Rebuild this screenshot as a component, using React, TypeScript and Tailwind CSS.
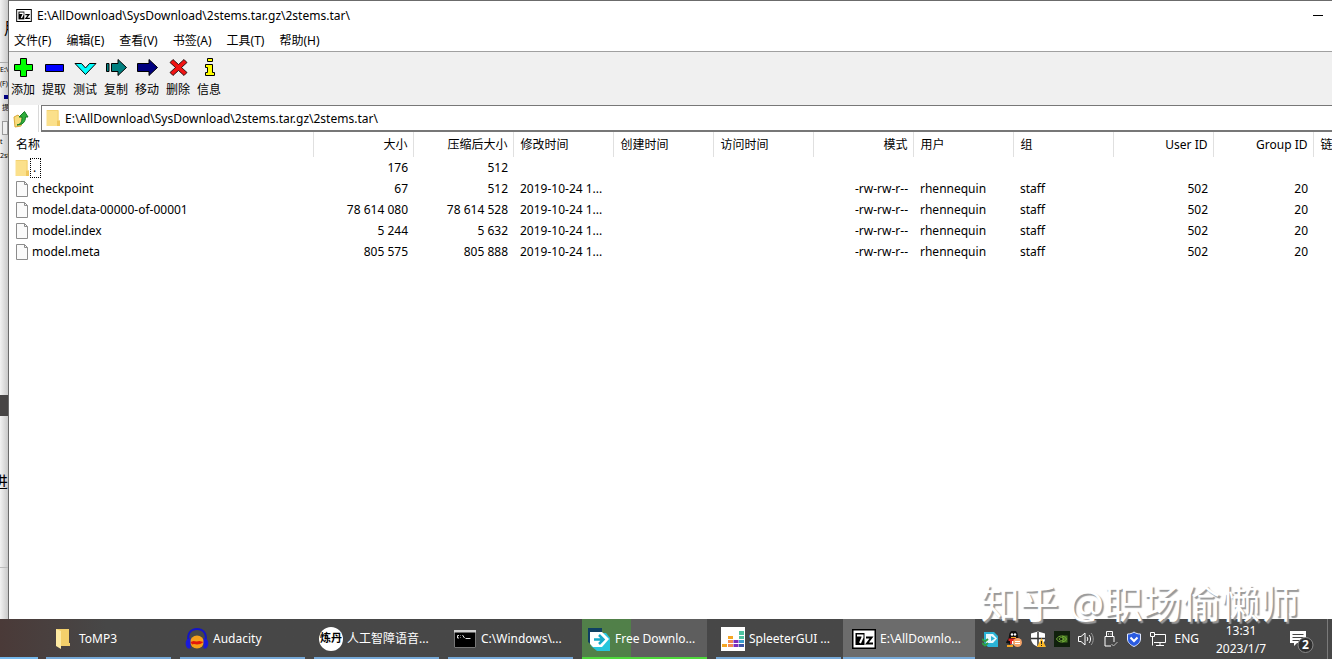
import type { ReactNode } from "react";

const PATH = "E:\\AllDownload\\SysDownload\\2stems.tar.gz\\2stems.tar\\";

const menus = ["文件(F)", "编辑(E)", "查看(V)", "书签(A)", "工具(T)", "帮助(H)"];

const tools: { label: string; icon: ReactNode }[] = [
  {
    label: "添加",
    icon: <path d="M9.500.5h6v6h6v6h-6v6h-6v-6h-6v-6h6z" fill="#0f0" />,
  },
  { label: "提取", icon: <path d="M3.500 6.500h18v7h-18z" fill="#00f" /> },
  {
    label: "测试",
    icon: <path d="M2 5.500h6.500l4 4.500 4-4.500H23L12.500 16.500z" fill="#0ff" />,
  },
  {
    label: "复制",
    icon: (
      <>
        <path d="M2.500 5.500h2.500v8H2.500z" fill="#008080" />
        <path d="M7.500 5.500H14v-4l8.500 8-8.500 8v-4H7.500z" fill="#008080" />
      </>
    ),
  },
  {
    label: "移动",
    icon: <path d="M2.500 5.500H14v-4l8.500 8-8.500 8v-4H2.500z" fill="#000080" />,
  },
  {
    label: "删除",
    icon: (
      <path
        d="M4 4.500l3-3 5.500 5 5.500-5 3 3-5.500 5 5.500 5-3 3-5.500-5-5.500 5-3-3 5.500-5z"
        fill="#f01414"
        strokeWidth=".8"
      />
    ),
  },
  {
    label: "信息",
    icon: (
      <path
        d="M10.500.5h5v3h-5zM8.500 6.500h7v8h2v3h-9v-3h2v-5h-2z"
        fill="#ff0"
      />
    ),
  },
];

type Column = { label: string; right?: boolean };

const columns: Column[] = [
  { label: "名称" },
  { label: "大小", right: true },
  { label: "压缩后大小", right: true },
  { label: "修改时间" },
  { label: "创建时间" },
  { label: "访问时间" },
  { label: "模式", right: true },
  { label: "用户" },
  { label: "组" },
  { label: "User ID", right: true },
  { label: "Group ID", right: true },
  { label: "链接" },
];

const DATE = "2019-10-24 1...";

const rows = [
  [".", "176", "512", "", "", "", "", "", "", "", "", ""],
  ["checkpoint", "67", "512"],
  ["model.data-00000-of-00001", "78 614 080", "78 614 528"],
  ["model.index", "5 244", "5 632"],
  ["model.meta", "805 575", "805 888"],
].map((r) =>
  r.length > 3
    ? r
    : [...r, DATE, "", "", "-rw-rw-r--", "rhennequin", "staff", "502", "20", ""]
);

function FolderIcon({ className }: { className?: string }) {
  return (
    <svg viewBox="0 0 14 16" className={className} aria-hidden>
      <path d="M.5 0h12v10.500H14V16H.5z" fill="#fbe08b" />
      <path d="M11 10.500h3V16h-3z" fill="#f0c75e" />
      <path d="M1 .5h11v10" fill="none" stroke="#f3d273" />
    </svg>
  );
}

function OpenFolderIcon() {
  return (
    <svg viewBox="0 0 16 20" className="h-5 w-4" aria-hidden>
      <path d="M1 0h13v14h1v3H5z" fill="#f3cf6b" />
      <path d="M1 0l5 2v18l-5-3z" fill="#fde9a2" />
    </svg>
  );
}

function FileIcon() {
  return (
    <svg viewBox="0 0 14 16" className="h-4 w-3.5 shrink-0" aria-hidden>
      <path d="M1.500.5h8l3 3v12h-11z" fill="#fafafa" stroke="#8c8c8c" />
      <path d="M9.500.5v3h3" fill="none" stroke="#8c8c8c" />
    </svg>
  );
}

function SevenZipIcon({ className }: { className?: string }) {
  return (
    <svg viewBox="0 0 24 20" className={className} aria-hidden>
      <path d="M0 0h24v20H0z" fill="#000" />
      <path d="M1.500 1.500h21v17h-21z" fill="#fff" />
      <path d="M3.500 4h9v12h-9z" fill="#000" />
      <path d="M5 6.500h5.500v2L8 14" fill="none" stroke="#fff" strokeWidth="2" />
      <path d="M14 8.500h5.500L15 14.500h6" fill="none" stroke="#000" strokeWidth="2" />
    </svg>
  );
}

function AudacityIcon() {
  return (
    <svg viewBox="0 0 24 24" className="size-6" aria-hidden>
      <ellipse cx="12" cy="15" rx="7" ry="6.500" fill="#f6a01a" />
      <path d="M5.500 15l3-1 3 .5 3-.5 4 1-3 2-3.500.5-3-.5-2 .5z" fill="#e3170a" />
      <path d="M3.500 14C2 6.500 6 2 12 2s10 4.500 8.500 12" fill="none" stroke="#1414c8" strokeWidth="2" />
      <path d="M5.500 11v10.500H3C0 19 0 14 2.500 12zM18.500 11v10.500H21c3-2.500 3-7.500.5-9.500z" fill="#1a1ad8" />
    </svg>
  );
}

function ConsoleIcon() {
  return (
    <svg viewBox="0 0 24 24" className="size-6" aria-hidden>
      <path d="M1 3h22v18H1z" fill="#000" />
      <path d="M1.500 3.500h21v17h-21z" fill="none" stroke="#777" />
      <path d="M1 3h22v2.500H1z" fill="#d0d0d0" />
      <path d="M6 8.500H4.500v2.500H6M7.500 8.500v.5M7.500 10.500v.5M9.500 8l2 3M12.500 11.500h5" fill="none" stroke="#ddd" />
    </svg>
  );
}

function DownloadIcon() {
  return (
    <svg viewBox="0 0 24 24" className="size-6" aria-hidden>
      <path d="M1 1h14v8l-8 11-6-5z" fill="#0f3f63" />
      <path d="M14 6h5l4 5v13H10l-6-5z" fill="#27c6dc" />
      <path d="M3 5h12l7 7-7 8H6l-3-3z" fill="#fff" />
      <path d="M7 12.500h9M12 8l4.500 4.500L12 17" fill="none" stroke="#15a9c7" strokeWidth="2.500" />
    </svg>
  );
}

function SpleeterIcon() {
  return (
    <svg viewBox="0 0 24 24" className="size-6" aria-hidden>
      <path d="M0 0h24v24H0z" fill="#fff" />
      <path d="M1 17h5v3H1zM7 9h5v3H7z" fill="#f5a623" />
      <path d="M7 13h5v3H7zM7 17h5v3H7z" fill="#f58a4e" />
      <path d="M12.500 13h5v3h-5zM12.500 17h5v3h-5z" fill="#7b2dbb" />
      <path d="M18 4h5v4h-5zM18 9h5v3h-5z" fill="#4fc3a1" />
      <path d="M18 13h5v3h-5z" fill="#3a9fd0" />
      <path d="M18 17h5v3h-5z" fill="#3c55a5" />
    </svg>
  );
}

function AlchemyIcon() {
  return (
    <span className="flex size-6 items-center justify-center rounded-full bg-white text-[11px] font-bold text-black">
      炼丹
    </span>
  );
}

const tasks = [
  { label: "ToMP3", icon: <OpenFolderIcon /> },
  { label: "Audacity", icon: <AudacityIcon /> },
  { label: "人工智障语音...", icon: <AlchemyIcon /> },
  { label: "C:\\Windows\\...", icon: <ConsoleIcon /> },
  {
    label: "Free Downlo...",
    icon: <DownloadIcon />,
    look: "border-[#4fd83c] bg-linear-to-r from-[#518049] from-39% to-[#5e5e5e] to-39%",
  },
  { label: "SpleeterGUI ...", icon: <SpleeterIcon /> },
];

function TaskButton({ label, icon, look }: { label: string; icon: ReactNode; look: string }) {
  return (
    <button
      className={`flex h-full shrink-0 items-center gap-1 border-b-2 pt-px whitespace-nowrap ${look}`}
    >
      <span className="flex size-6 shrink-0 items-center justify-center">{icon}</span>
      {label}
    </button>
  );
}

const trayIcons: { name: string; icon: ReactNode }[] = [
  {
    name: "Downloads",
    icon: (
      <>
        <path d="M2 1h10l4 4v11H6L2 12z" fill="#2bb3d6" />
        <path d="M4 3h7l4 4.500-4 4.500H4z" fill="#e8f8fb" />
        <path d="M9 5l4 2.500L9 10z" fill="#2bb3d6" />
        <path d="M0 8l3 2.500L6 8M0 12l3 2.500L6 12" fill="none" stroke="#2f9e44" strokeWidth="2" />
      </>
    ),
  },
  {
    name: "QQ",
    icon: (
      <>
        <path d="M3 5a4 5 0 0 1 9 0c0 3 2 5 2 7l-2 .5c0 2-9 2-9 0L0 12c0-2 3-4 3-7z" fill="#111" />
        <path d="M4.500 9.500h6v4h-6z" fill="#fff" />
        <path d="M2.500 7.500h10v2.500H6v3H4v-3H2.500z" fill="#e02020" />
        <circle cx="6" cy="3.500" r="1.200" fill="#fff" />
        <circle cx="9" cy="3.500" r="1.200" fill="#fff" />
        <path d="M5 6h5v1H5z" fill="#f5a623" />
        <path d="M1 14h6v2H1z" fill="#f5a623" />
        <circle cx="11.500" cy="11.500" r="4.500" fill="#f4a368" />
        <path d="M9 10.500h5M9 12.500h5" stroke="#fff" />
      </>
    ),
  },
  {
    name: "Security",
    icon: (
      <>
        <path d="M8 .5l7 2v5c0 4-3 7-7 8.500C4 14.500 1 11.500 1 7.500v-5z" fill="#fff" />
        <path d="M8 1v14M1 7.500h14" stroke="#333" strokeWidth="1.500" />
        <path d="M11.500 7l4.500 9H7z" fill="#fcb827" />
        <path d="M11.500 10v3M11.500 14v1" stroke="#222" />
      </>
    ),
  },
  {
    name: "NVIDIA",
    icon: (
      <>
        <path d="M0 0h16v16H0z" fill="#10200c" />
        <path d="M8 4.500h5.500v7H8z" fill="#5b9a2b" fillOpacity=".7" />
        <path d="M2.500 8c2-4 8-4 10 0-2 4-8 4-10 0zM5 8c1-2 4-2 5 0-1 2-4 2-5 0z" fill="none" stroke="#76b03a" />
      </>
    ),
  },
  {
    name: "Volume",
    icon: (
      <g fill="none" stroke="#fff">
        <path d="M.5 5.500h2.500l4-3.500v12l-4-3.500H.5z" />
        <path d="M9 6c1 1 1 3 0 4M11 4c2 2 2 6 0 8" />
        <path d="M13 2c3 3 3 9 0 12" stroke="#999" />
      </g>
    ),
  },
  {
    name: "USB",
    icon: (
      <g fill="none" stroke="#fff">
        <path d="M4.500 5V.5h6V5M3 5.500h9V11M3 5.500v9.500h6M6 3h1M8.500 3h1" />
        <path d="M9.500 13l2 2 4-4" stroke="#bbb" />
      </g>
    ),
  },
  {
    name: "Guard",
    icon: (
      <>
        <path d="M8 1c2 1.500 4 2 6.500 2v5c0 3.500-3 6-6.500 7.500C4.500 14 1.500 11.500 1.500 8V3C4 3 6 2.500 8 1z" fill="#2a5be0" stroke="#dfe8ff" />
        <path d="M4.500 6.500L8 10l3.500-3.500" fill="none" stroke="#fff" strokeWidth="2" />
      </>
    ),
  },
  {
    name: "Network",
    icon: (
      <g fill="none" stroke="#fff">
        <path d="M5 3.500h10.500v8H4M10 11.500v3M6 14.500h8" />
        <path d="M.5 1.500h4v4h-4zM2.500 5.500v9" />
      </g>
    ),
  },
];

function Tray() {
  return (
    <div className="flex h-full items-center pr-1">
      <div className="flex items-center gap-2">
        {trayIcons.map((t) => (
          <button key={t.name} aria-label={t.name}>
            <svg viewBox="0 0 16 16" className="size-4" aria-hidden>
              {t.icon}
            </svg>
          </button>
        ))}
      </div>
      <button className="ml-2">ENG</button>
      <button className="ml-3.5 w-[56px] pt-0.5 text-center leading-[18px] whitespace-nowrap">
        13:31
        <br />
        2023/1/7
      </button>
      <button className="relative ml-5 size-6" aria-label="2 notifications">
        <svg viewBox="0 0 24 24" className="size-6 overflow-visible" aria-hidden>
          <path d="M1 4h16v12H8l-3 3v-3H1z" fill="#fff" />
          <path d="M3.500 7.500h11M3.500 10.500h11M3.500 13.500h7" stroke="#474747" />
          <circle cx="16.500" cy="18" r="7.500" fill="#2f2f2f" stroke="#8a8a8a" />
        </svg>
        <span className="absolute top-[9px] left-[13px] text-[12px] leading-[18px] font-bold">2</span>
      </button>
      <span className="ml-3.5 h-full w-px bg-[#7a7a7a]" />
    </div>
  );
}

/* Sliver of the browser window that sits behind the archive window */
function BackgroundStrip() {
  return (
    <div
      className="flex w-2 shrink-0 flex-col overflow-hidden bg-linear-to-r from-[#f2f2f2] to-[#c9c9c9] whitespace-nowrap text-black"
      aria-hidden
    >
      <span className="mt-4 ml-1 h-[46px] text-[16px] leading-6">用</span>
      <div className="h-[96px] border-t border-[#aaa] text-[7px] leading-[14px]">
        <p>E:\</p>
        <p>(F)</p>
        <div className="mt-1 ml-1 h-1 w-1 bg-[#000080]" />
        <p className="ml-0.5 h-[22px] pt-0.5">提</p>
        <p className="ml-0.5 h-3.5 border border-[#999] bg-[#eee]" />
        <p>t</p>
        <p>2ste</p>
      </div>
      <div className="mt-[237px] h-[21px] bg-[#474545]" />
      <span className="mt-[54px] -ml-2 text-[16px] leading-6">进行</span>
      <div className="mt-auto h-[52px] border-t border-[#bbb]" />
    </div>
  );
}

export default function App() {
  return (
    <div className="relative flex h-screen flex-col overflow-hidden bg-white font-['Noto_Sans','Noto_Sans_CJK_SC',sans-serif] text-[12px] text-black">
      <div className="flex min-h-0 flex-1">
        <BackgroundStrip />
        <main className="flex min-w-0 flex-1 flex-col border-t border-l border-[#6b6b6b] bg-white">
          <header className="flex h-[29px] shrink-0 items-center gap-[5px] pr-[9px] pl-[7px]">
            <SevenZipIcon className="h-[13px] w-4" />
            <h1>{PATH}</h1>
            <button className="ml-auto flex h-5 w-2.5 items-center" aria-label="Minimize">
              <span className="h-px w-full bg-black" />
            </button>
          </header>

          <nav className="flex h-[22px] shrink-0 items-center gap-[15px] border-b border-[#a0a0a0] px-[5px]">
            {menus.map((m) => (
              <button key={m} className="whitespace-nowrap">
                {m}
              </button>
            ))}
          </nav>

          <div className="flex h-[53px] shrink-0 items-start gap-[7px] bg-[#f0f0f0] pt-1.5 pl-0.5">
            {tools.map((t) => (
              <button key={t.label} className="flex w-6 flex-col items-center gap-0.5">
                <svg viewBox="0 0 24 20" className="h-5 w-6" stroke="#000" aria-hidden>
                  {t.icon}
                </svg>
                <span className="leading-5 whitespace-nowrap">{t.label}</span>
              </button>
            ))}
          </div>

          <div className="flex h-[27px] shrink-0">
            <button className="mr-0.5 flex w-[30px] items-center border-r border-[#d8d8d8] pl-1" aria-label="Up">
              <svg viewBox="0 0 16 18" className="h-[18px] w-4" aria-hidden>
                <path d="M1 7l4-2 2 2h3l-2 9-6 1z" fill="#f8dc7c" stroke="#d9a93a" />
                <path d="M4 15c4-1 5-3 5-8H6l5.500-5.500L15 7h-2.500c0 5-3 8-8.500 8z" fill="#2fae3b" stroke="#147a23" />
              </svg>
            </button>
            <label className="flex flex-1 items-center gap-[5px] border-t border-b-2 border-l border-[#777] pl-1">
              <FolderIcon className="h-4 w-3.5" />
              <input className="flex-1 pt-px outline-none" aria-label="Path" defaultValue={PATH} />
            </label>
          </div>

          <div className="min-h-0 flex-1 overflow-hidden">
            <table className="w-full min-w-[1404px] table-fixed border-collapse">
              <thead>
                <tr className="h-[25px]">
                  {columns.map((c, i) => (
                    <th
                      key={c.label}
                      className={`border-r border-[#e0e0e0] pr-[5px] pl-[7px] font-normal whitespace-nowrap ${i === 0 ? "w-[304px]" : "w-[100px]"} ${c.right ? "text-right" : "text-left"}`}
                    >
                      {c.label}
                    </th>
                  ))}
                </tr>
              </thead>
              <tbody>
                {rows.map(([name, ...cells], i) => (
                  <tr key={name} className="h-[21px] whitespace-nowrap">
                    <td className="pl-1.5">
                      <div className="flex items-center gap-px">
                        {i === 0 ? <FolderIcon className="h-4 w-3.5" /> : <FileIcon />}
                        <span
                          className={
                            i === 0
                              ? "h-5 w-[11px] border border-dotted border-black px-0.5 leading-[18px]"
                              : "px-0.5"
                          }
                        >
                          {name}
                        </span>
                      </div>
                    </td>
                    {cells.map((cell, j) => (
                      <td key={j} className={`pr-[5px] pl-[7px] ${columns[j + 1].right ? "text-right" : ""}`}>
                        {cell}
                      </td>
                    ))}
                  </tr>
                ))}
              </tbody>
            </table>
          </div>
        </main>
      </div>

      <footer className="flex h-10 shrink-0 bg-linear-to-r from-[#4a3a38] to-[#474747] to-8% text-[12px] text-white">
        <div className="flex gap-[9px]">
          <span className="-mr-px w-[38px] border-b-2 border-[#76b9ed]" />
          {tasks.map((t) => (
            <TaskButton
              key={t.label}
              label={t.label}
              icon={t.icon}
              look={`w-[125px] px-[5px] ${t.look ?? "border-[#76a9d8]"}`}
            />
          ))}
        </div>
        <TaskButton
          label="E:\AllDownlo..."
          icon={<SevenZipIcon className="h-5 w-6" />}
          look="ml-0.5 w-[132px] border-[#76a9d8] bg-[#6c6c6c] pl-[9px]"
        />
        <div className="ml-auto">
          <Tray />
        </div>
      </footer>

      <p className="pointer-events-none absolute right-[33px] bottom-[38px] text-[39px] leading-9 text-white [text-shadow:2px_2px_1px_#999]">
        知乎 @职场偷懒师
      </p>
    </div>
  );
}
